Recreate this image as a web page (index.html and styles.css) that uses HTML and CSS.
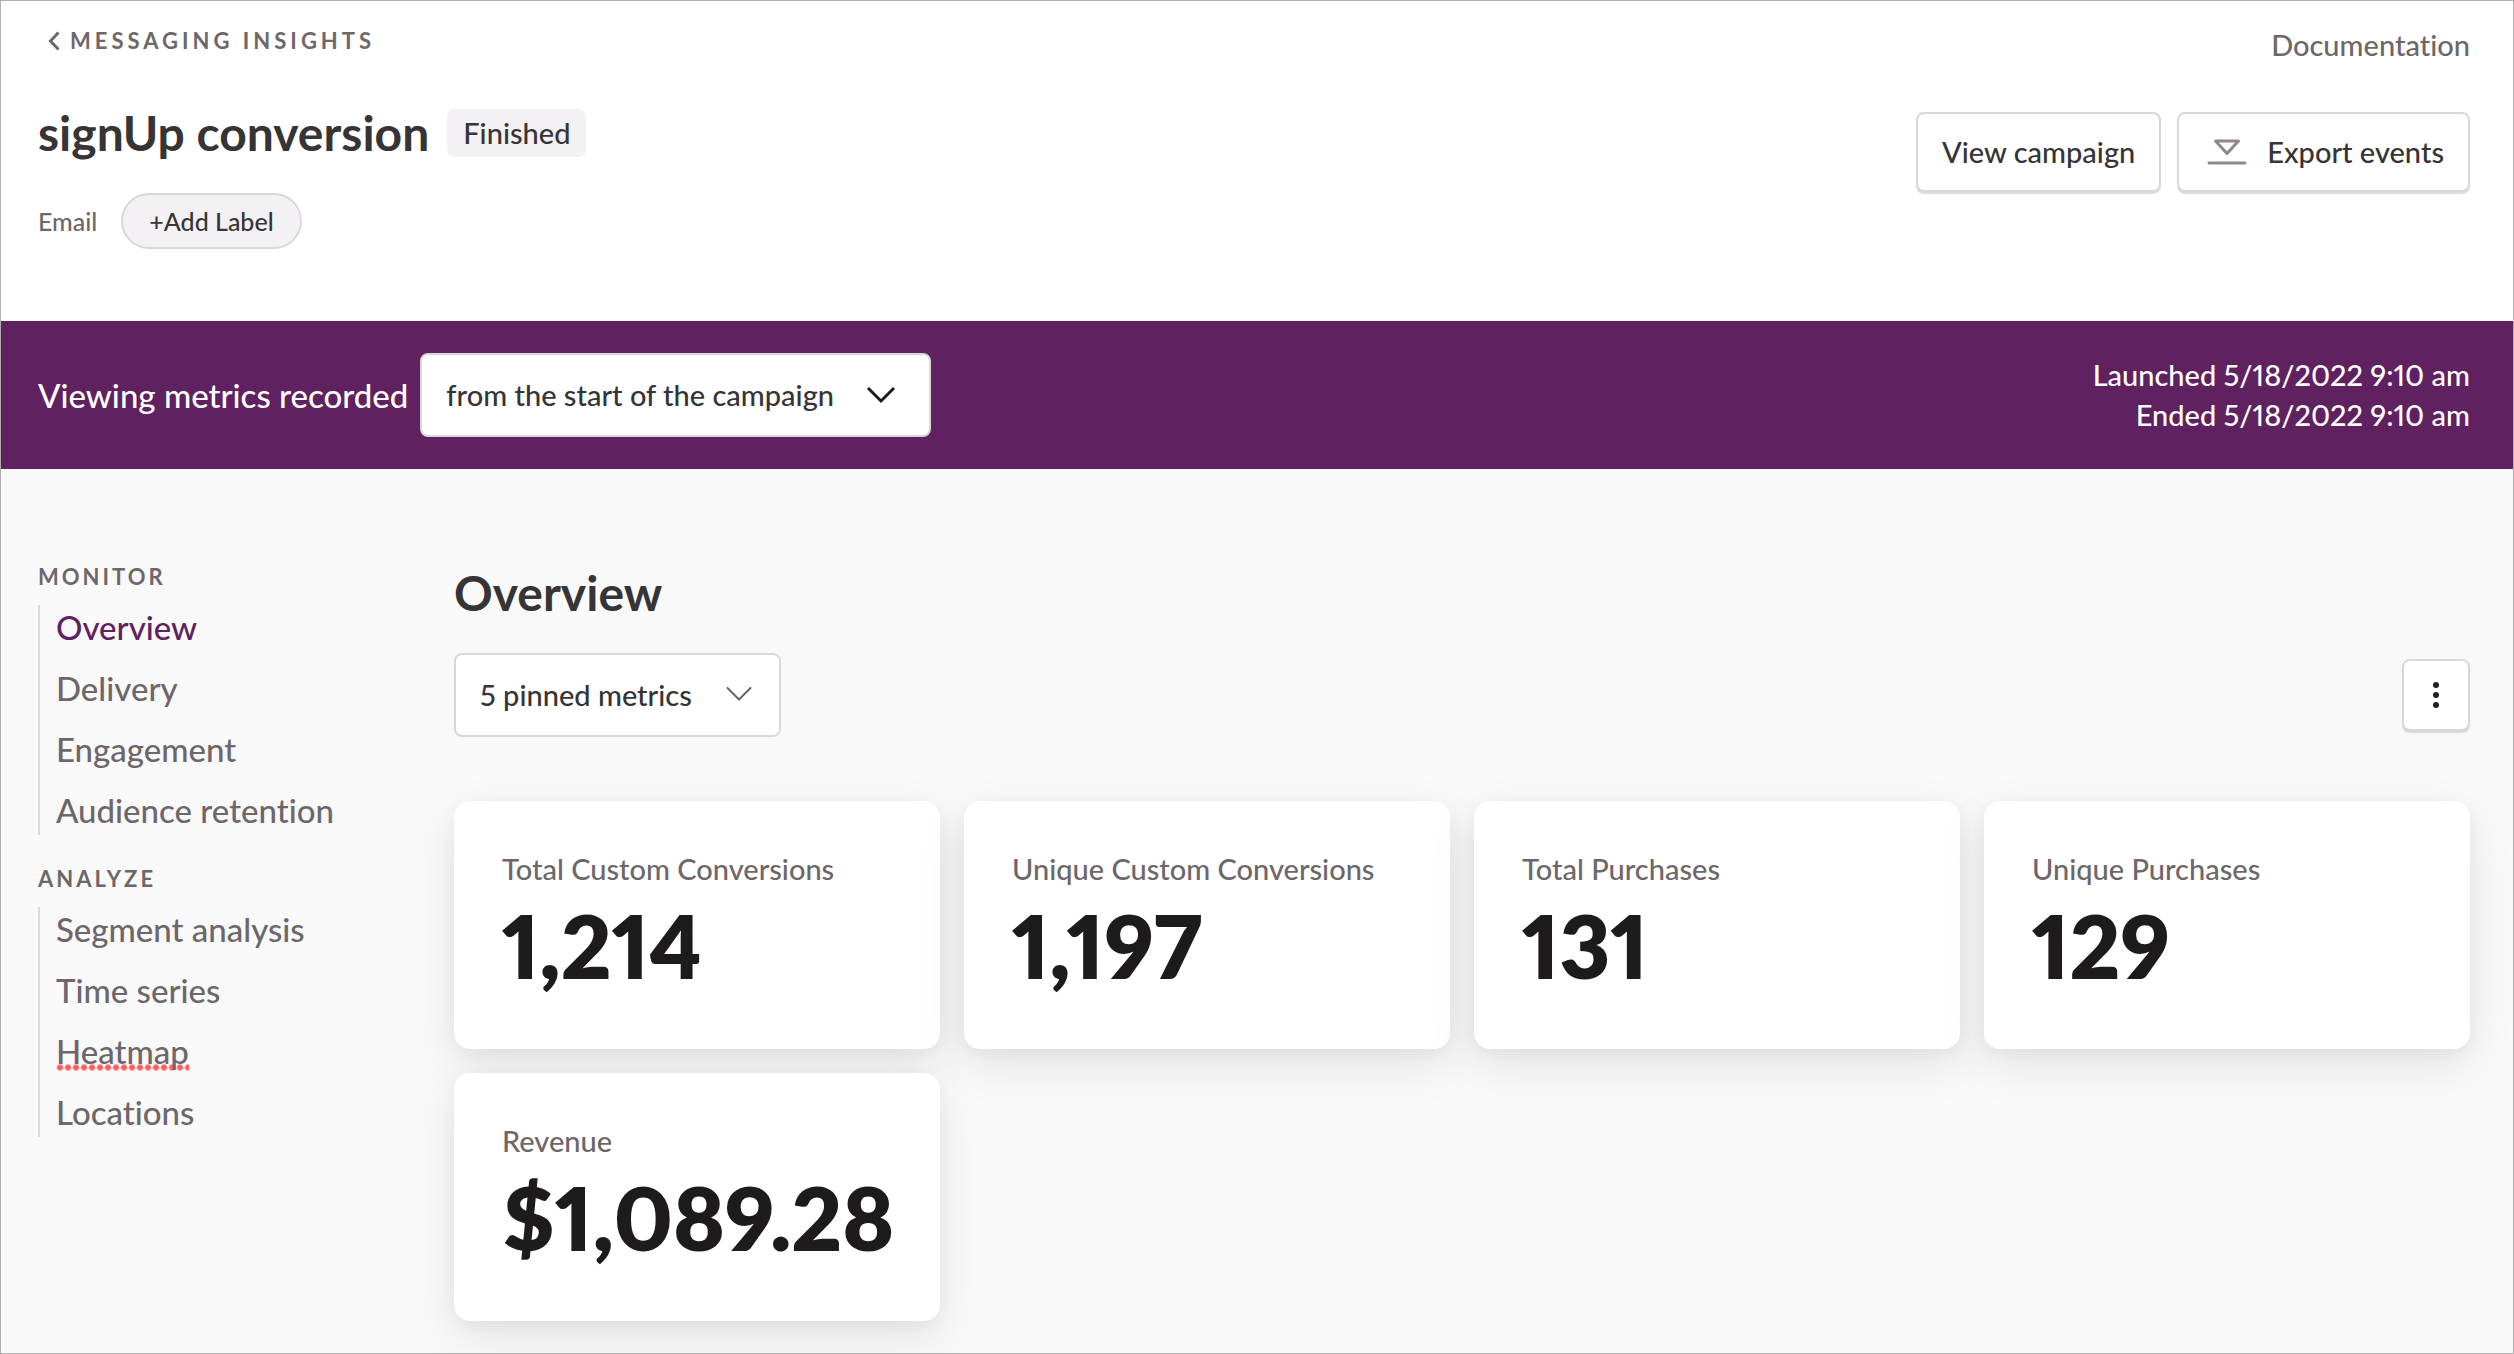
FILE: index.html
```
<!DOCTYPE html>
<html lang="en">
<head>
    <meta charset="UTF-8">
    <meta name="viewport" content="width=device-width, initial-scale=1.0">
    <title>signUp conversion - Messaging Insights</title>
    <link rel="stylesheet" href="styles.css">
</head>
<body>
    <header class="header">
        <div class="topbar">
            <a href="#" class="breadcrumb">
                <svg class="back-icon" width="12" height="20" viewBox="0 0 12 20" fill="none" stroke="currentColor" stroke-width="3">
                    <path d="M10.5 1.5 2.5 10l8 8.5"/>
                </svg>
                Messaging Insights
            </a>
            <a href="#" class="doc-link">Documentation</a>
        </div>
        <div class="header-main">
            <div>
                <div class="title-row">
                    <h1>signUp conversion</h1>
                    <span class="badge">Finished</span>
                </div>
                <div class="label-row">
                    <span>Email</span>
                    <button type="button" class="add-label">+Add Label</button>
                </div>
            </div>
            <div class="actions">
                <button type="button" class="btn">View campaign</button>
                <button type="button" class="btn btn-export">
                    <svg width="40" height="28" viewBox="0 0 40 28" fill="none" stroke="#918689" stroke-width="3" stroke-linecap="round" stroke-linejoin="round">
                        <path d="M8.500 3h23L20 15.500z"/>
                        <path d="M2 25h36"/>
                    </svg>
                    Export events
                </button>
            </div>
        </div>
    </header>

    <section class="banner">
        <div class="range">
            <label for="range">Viewing metrics recorded</label>
            <div class="select-box range-box">
                <select id="range">
                    <option>from the start of the campaign</option>
                </select>
                <svg class="chevron chevron-range" width="30" height="18" viewBox="0 0 30 18" fill="none" stroke="#1d1b1c" stroke-width="3">
                    <path d="M2 2l13 13L28 2"/>
                </svg>
            </div>
        </div>
        <div class="dates">
            <div>Launched 5/18/2022 9:10 am</div>
            <div>Ended 5/18/2022 9:10 am</div>
        </div>
    </section>

    <div class="content">
        <nav class="sidebar">
            <h2>Monitor</h2>
            <ul>
                <li><a href="#" class="active">Overview</a></li>
                <li><a href="#">Delivery</a></li>
                <li><a href="#">Engagement</a></li>
                <li><a href="#">Audience retention</a></li>
            </ul>
            <h2>Analyze</h2>
            <ul>
                <li><a href="#">Segment analysis</a></li>
                <li><a href="#">Time series</a></li>
                <li><a href="#" class="misspelled">Heatmap</a></li>
                <li><a href="#">Locations</a></li>
            </ul>
        </nav>

        <main class="main">
            <h2>Overview</h2>
            <div class="toolbar">
                <div class="select-box metrics-box">
                    <select id="metrics" aria-label="Pinned metrics">
                        <option>5 pinned metrics</option>
                    </select>
                    <svg class="chevron chevron-metrics" width="26" height="16" viewBox="0 0 26 16" fill="none" stroke="#696264" stroke-width="2" stroke-linecap="round" stroke-linejoin="round">
                        <path d="M1.500 2 13 13.500 24.500 2"/>
                    </svg>
                </div>
                <button type="button" class="menu-btn" aria-label="More options">
                    <svg width="8" height="28" viewBox="0 0 8 28" fill="#231f20">
                        <circle cx="4" cy="4" r="3"/>
                        <circle cx="4" cy="14" r="3"/>
                        <circle cx="4" cy="24" r="3"/>
                    </svg>
                </button>
            </div>
            <div class="cards">
                <div class="card">
                    <div class="card-label">Total Custom Conversions</div>
                    <div class="card-value">1,214</div>
                </div>
                <div class="card">
                    <div class="card-label">Unique Custom Conversions</div>
                    <div class="card-value">1,197</div>
                </div>
                <div class="card">
                    <div class="card-label">Total Purchases</div>
                    <div class="card-value">131</div>
                </div>
                <div class="card">
                    <div class="card-label">Unique Purchases</div>
                    <div class="card-value">129</div>
                </div>
                <div class="card">
                    <div class="card-label">Revenue</div>
                    <div class="card-value">$1,089.28</div>
                </div>
            </div>
        </main>
    </div>
</body>
</html>
```
FILE: styles.css
```
* {
    box-sizing: border-box;
}
body {
    margin: 0;
    min-height: 100vh;
    border: 1px solid #b1b0b1;
    background-color: #f9f9f9;
    color: #363435;
    font-family: Lato, "Open Sans", sans-serif;
    font-size: 29px;
    font-weight: 500;
    line-height: 40px;
    font-variant-ligatures: none;
    font-variant-numeric: proportional-nums;
}
h1, h2, ul {
    margin: 0;
    padding: 0;
}
a {
    color: #6d6769;
    text-decoration: none;
}
button, select {
    font: inherit;
    font-variant-ligatures: none;
    color: inherit;
    cursor: pointer;
}

/* header */
.header {
    padding: 24px 43px 72px 37px;
    background-color: #fff;
}
.topbar {
    display: flex;
    justify-content: space-between;
    align-items: flex-start;
}
.breadcrumb {
    display: flex;
    align-items: center;
    gap: 10px;
    padding-left: 10px;
    font-size: 22px;
    font-weight: bold;
    line-height: 32px;
    letter-spacing: 4px;
    text-transform: uppercase;
}
.header-main {
    display: flex;
    justify-content: space-between;
    align-items: flex-start;
    margin-top: 43px;
}
.title-row {
    display: flex;
    align-items: center;
    gap: 18px;
}
.title-row h1 {
    font-size: 48px;
    line-height: 50px;
}
.badge {
    padding: 4px 16px;
    border-radius: 8px;
    background-color: #f3f1f3;
}
.label-row {
    display: flex;
    align-items: center;
    gap: 24px;
    margin-top: 35px;
    color: #6d6769;
    font-size: 25px;
}
.add-label {
    height: 56px;
    padding: 0 26px;
    border: 2px solid #d9d8d9;
    border-radius: 28px;
    background-color: #f3f1f3;
    color: #363435;
}
.actions {
    display: flex;
    gap: 16px;
    margin-top: 4px;
}
.btn {
    height: 80px;
    padding: 0 24px;
    border: 2px solid #d9d8d9;
    border-radius: 8px;
    background-color: #fff;
    box-shadow: 0 2px 1px #dddcdd;
}
.btn-export {
    display: flex;
    align-items: center;
    gap: 20px;
    padding-left: 28px;
}

/* purple bar */
.banner {
    display: flex;
    justify-content: space-between;
    align-items: center;
    padding: 32px 43px 32px 37px;
    background-color: #5f2160;
    color: #fff;
}
.range {
    display: flex;
    align-items: center;
    gap: 12px;
    font-size: 33px;
}
.dates {
    text-align: right;
}
.select-box {
    position: relative;
    font-size: 29px;
}
.select-box select {
    display: block;
    width: 100%;
    height: 84px;
    padding: 0 24px;
    border: 2px solid #d9d8d9;
    border-radius: 8px;
    background-color: #fff;
    color: #363435;
    appearance: none;
}
.range-box {
    width: 511px;
}
.metrics-box {
    width: 327px;
}
.chevron {
    position: absolute;
    top: 33px;
    pointer-events: none;
}
.chevron-range {
    right: 35px;
}
.chevron-metrics {
    right: 29px;
}

/* content */
.content {
    display: grid;
    grid-template-columns: 416px 1fr;
    padding: 92px 43px 30px 37px;
}
.sidebar h2 {
    font-size: 22px;
    line-height: 32px;
    letter-spacing: 3px;
    text-transform: uppercase;
    color: #6d6769;
}
.sidebar ul {
    display: flex;
    flex-direction: column;
    gap: 16px;
    margin: 12px 0 28px;
    padding: 0 0 2px 16px;
    border-left: 2px solid #dbdadb;
    list-style: none;
    font-size: 33px;
    line-height: 45px;
}
.sidebar .active {
    color: #5f2160;
}
/* spell check dots */
.misspelled {
    background: radial-gradient(circle, #ff5c60 2px, transparent 4px) left bottom / 8px 7px repeat-x;
}
.main h2 {
    font-size: 48px;
    line-height: 64px;
}
.toolbar {
    display: flex;
    justify-content: space-between;
    align-items: center;
    margin: 28px 0 64px;
}
.menu-btn {
    display: flex;
    align-items: center;
    justify-content: center;
    width: 68px;
    height: 72px;
    padding: 0;
    border: 2px solid #d9d8d9;
    border-radius: 8px;
    background-color: #fff;
    box-shadow: 0 2px 1px #d9d8d9;
}
.cards {
    display: grid;
    grid-template-columns: repeat(4, 1fr);
    gap: 24px;
}
.card {
    min-width: 0;
    padding: 48px;
    border-radius: 16px;
    background-color: #fff;
    box-shadow: 0 16px 48px rgba(0, 0, 0, 0.09), 0 4px 16px rgba(0, 0, 0, 0.04);
}
.card-label {
    color: #6d6769;
}
.card-value {
    color: #1d1b1c;
    font-size: 88px;
    font-weight: 800;
    line-height: 112px;
}
```
